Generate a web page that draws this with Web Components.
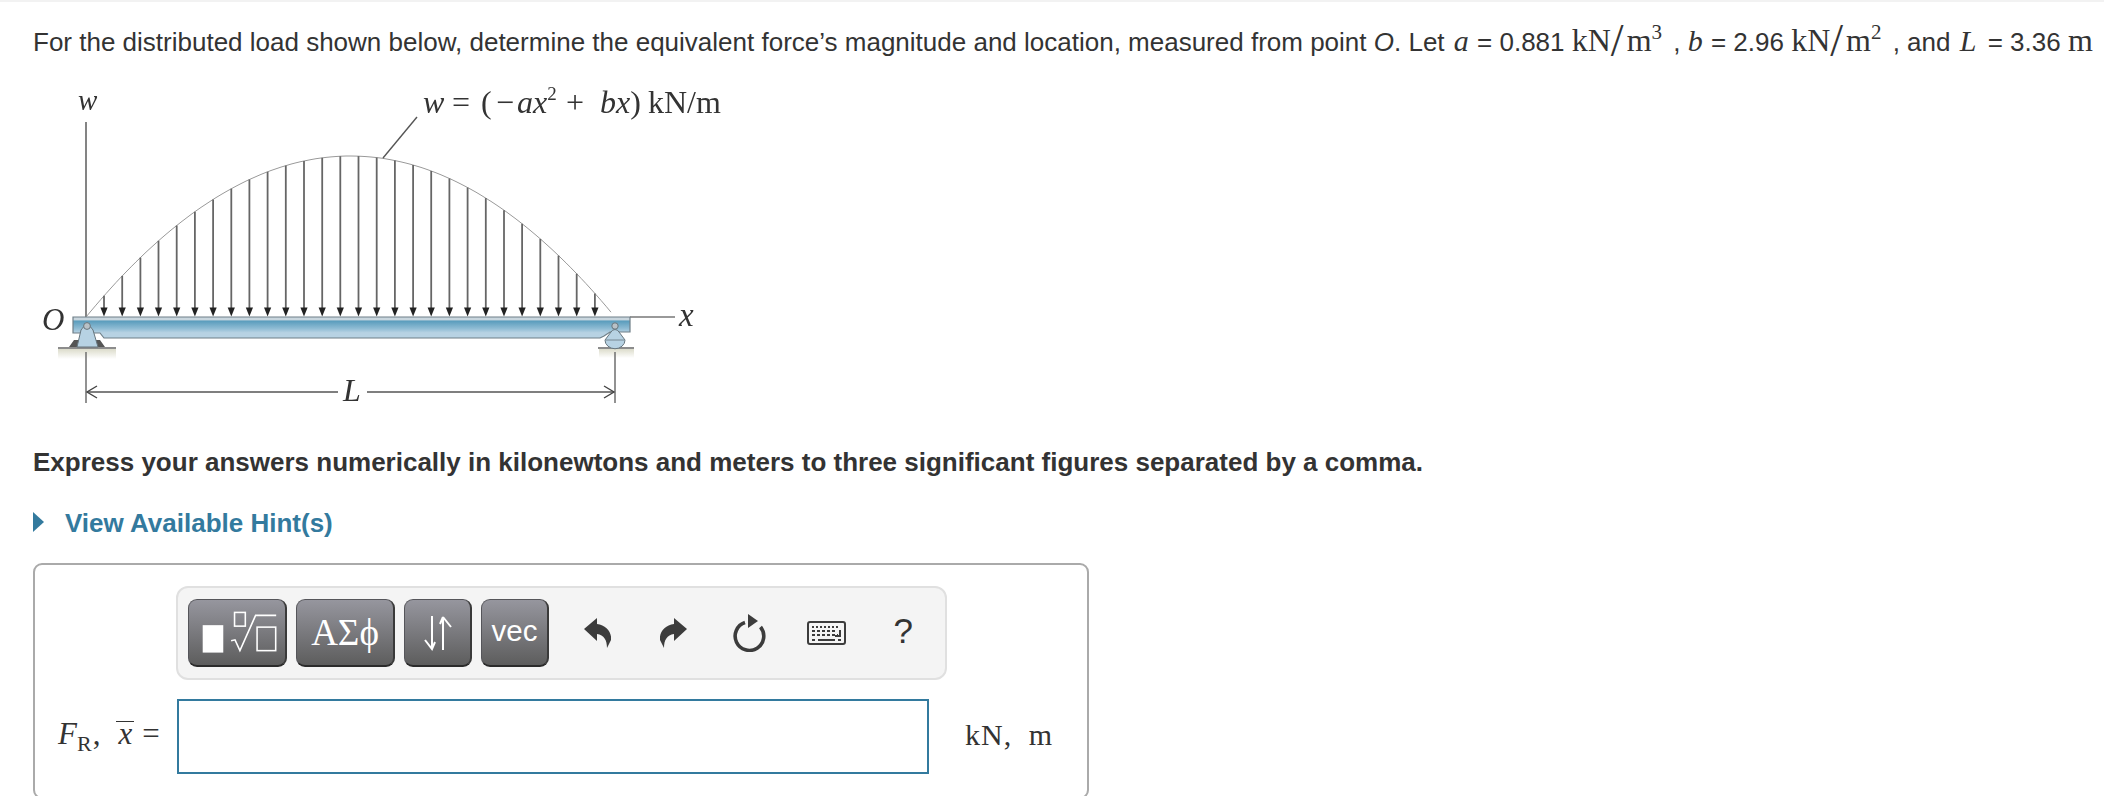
<!DOCTYPE html>
<html>
<head>
<meta charset="utf-8">
<title>Distributed load</title>
<style>
  html, body { margin: 0; height: 796px; overflow: hidden; background: #fff; }
</style>
</head>
<body>
<quiz-page>
  <problem-text>For the distributed load shown below, determine the equivalent force’s magnitude and location, measured from point <i>O</i>. Let <m-var>a</m-var> = 0.881 <m-unit>kN<m-slash>/</m-slash>m<sup>3</sup></m-unit> , <m-var style="margin-left:0">b</m-var> = 2.96 <m-unit>kN<m-slash>/</m-slash>m<sup>2</sup></m-unit> , and <m-var style="margin-right:4px">L</m-var> = 3.36 <m-unit>m</m-unit></problem-text>
  <load-figure></load-figure>
  <instruction-text>Express your answers numerically in kilonewtons and meters to three significant figures separated by a comma.</instruction-text>
  <hint-toggle>View Available Hint(s)</hint-toggle>
  <answer-box></answer-box>
</quiz-page>

<script>
/**
 * Small inline math bits. They only set fonts, no shadow markup of note.
 */
function defineStyled(name, css) {
  customElements.define(name, class extends HTMLElement {
    constructor() {
      super();
      this.attachShadow({mode: 'open'}).innerHTML = `<style>${css}</style><slot></slot>`;
    }
  });
}

defineStyled('m-var', `:host { font: italic 30px/0 "Liberation Serif", serif; margin: 0 1px 0 2px; }`);
defineStyled('m-unit', `:host { font: 32px/0 "Liberation Serif", serif; margin-right: 4px; white-space: nowrap; }
  ::slotted(sup) { font-size: 21px; line-height: 0; vertical-align: 12px; }`);
defineStyled('m-slash', `:host { font: 46px/0 "Liberation Serif", serif; vertical-align: -5px; margin-right: 3px; }`);

/**
 * QuizPage
 */
customElements.define('quiz-page', class QuizPage extends HTMLElement {
constructor() {
  super();
  const template = document.createElement('template');
  template.innerHTML = `
<style>
  :host {
    display: block;
    box-sizing: border-box;
    height: 796px;
    padding: 0 0 0 33px;
    border-top: 2px solid #f2f2f2;
    color: #333;
    font: 26px/30px "Liberation Sans", Arial, sans-serif;
    overflow: hidden;
  }
</style>
<slot></slot>
`;
  this.attachShadow({mode: 'open'}).appendChild(template.content.cloneNode(true));
}
});

/**
 * ProblemText
 */
customElements.define('problem-text', class ProblemText extends HTMLElement {
constructor() {
  super();
  this.attachShadow({mode: 'open'}).innerHTML = `
<style>
  :host {
    display: block;
    margin-top: 25px;
    height: 30px;
    white-space: nowrap;
  }
</style>
<slot></slot>
`;
}
});

/**
 * LoadFigure - the beam drawing, arrows are worked out from the parabola
 */
customElements.define('load-figure', class LoadFigure extends HTMLElement {
constructor() {
  super();

  const curveY = x => {
    const t = (x - 86) / (615 - 86);
    return 317 - 161 * 4 * t * (1 - t);
  };

  let curve = 'M86 317';
  for (let x = 91; x <= 615; x += 5) {
    curve += ` L${x} ${curveY(x).toFixed(1)}`;
  }

  let arrows = '';
  for (let i = 0; i < 28; i++) {
    const x = (104 + i * 18.18).toFixed(1);
    const top = curveY(+x).toFixed(1);
    arrows += `<line x1="${x}" y1="${top}" x2="${x}" y2="310" stroke="#666" stroke-width="1.8"/>`
      + `<path d="M${x - 3.6} 307.5 H${+x + 3.6} L${x} 316.5 Z" fill="#222"/>`;
  }

  this.attachShadow({mode: 'open'}).innerHTML = `
<style>
  :host {
    display: block;
    height: 340px;
    width: 720px;
    margin-top: 23px;
  }
  svg {
    display: block;
    filter: blur(.4px);
  }
  text {
    font-family: "Liberation Serif", "Times New Roman", serif;
    fill: #333;
  }
  .it { font-style: italic; }
</style>
<svg width="720" height="340" viewBox="33 80 720 340">
  <defs>
    <linearGradient id="beam" x1="0" y1="0" x2="0" y2="1">
      <stop offset="0" stop-color="#c9d6de"/>
      <stop offset=".12" stop-color="#c9d6de"/>
      <stop offset=".2" stop-color="#5b9dbd"/>
      <stop offset=".55" stop-color="#8fbcd4"/>
      <stop offset=".75" stop-color="#b7d2e3"/>
      <stop offset="1" stop-color="#b7d2e3"/>
    </linearGradient>
    <linearGradient id="ground" x1="0" y1="0" x2="0" y2="1">
      <stop offset="0" stop-color="#dcdccb"/>
      <stop offset="1" stop-color="#fff"/>
    </linearGradient>
  </defs>

  <text x="78" y="110" class="it" font-size="29">w</text>
  <line x1="86" y1="122" x2="86" y2="318" stroke="#777" stroke-width="1.8"/>

  <path d="${curve}" fill="none" stroke="#999" stroke-width="1"/>
  ${arrows}

  <line x1="383" y1="158" x2="417" y2="117" stroke="#555" stroke-width="1.4"/>
  <text y="113" font-size="32"><tspan x="423" class="it">w</tspan><tspan x="452">=</tspan><tspan x="481">(</tspan><tspan x="496">−</tspan><tspan x="517" class="it">ax</tspan><tspan font-size="19" dy="-13">2</tspan><tspan x="566" dy="13">+</tspan><tspan x="600" class="it">bx</tspan><tspan>)</tspan><tspan x="648">kN/m</tspan></text>

  <line x1="630" y1="317" x2="675" y2="317" stroke="#777" stroke-width="1.6"/>
  <text x="679" y="326" class="it" font-size="33">x</text>
  <text x="42" y="330" class="it" font-size="31">O</text>

  <path d="M73 317 H630 V332 H610 L604 336 L600 338 H104 L100 333 H73 Z" fill="url(#beam)" stroke="#6f7f88" stroke-width="1.2"/>

  <!-- left support -->
  <rect x="58" y="349" width="58" height="10" fill="url(#ground)"/>
  <line x1="58" y1="348" x2="116" y2="348" stroke="#666" stroke-width="1.6"/>
  <path d="M69 347 L74 340 H80 V347 Z M94 347 V340 H100 L105 347 Z" fill="#555"/>
  <path d="M77 347 L81 330 A6.5 6.5 0 0 1 93 330 L98 347 Z" fill="#b7d2e3" stroke="#66757d" stroke-width="1"/>
  <circle cx="87" cy="326" r="3.4" fill="#b9c1c6" stroke="#66757d"/>

  <!-- right support -->
  <rect x="599" y="349" width="35" height="9" fill="url(#ground)"/>
  <line x1="598" y1="348" x2="634" y2="348" stroke="#666" stroke-width="1.6"/>
  <path d="M611 332 A4.5 4.5 0 0 1 619 332 L625 340 A8 7 0 0 1 605 340 Z" fill="#b7d2e3" stroke="#66757d" stroke-width="1"/>
  <line x1="606" y1="340" x2="624" y2="340" stroke="#66757d" stroke-width=".8"/>
  <circle cx="615" cy="326" r="3.2" fill="#b9c1c6" stroke="#66757d"/>

  <!-- dimension L -->
  <line x1="86" y1="352" x2="86" y2="403" stroke="#777" stroke-width="1.6"/>
  <line x1="615" y1="352" x2="615" y2="403" stroke="#777" stroke-width="1.6"/>
  <line x1="87" y1="392" x2="338" y2="392" stroke="#555" stroke-width="1.4"/>
  <line x1="367" y1="392" x2="614" y2="392" stroke="#555" stroke-width="1.4"/>
  <path d="M97 386 L87 392 L97 398 M604 386 L614 392 L604 398" fill="none" stroke="#444" stroke-width="1.4"/>
  <text x="343" y="401" class="it" font-size="32">L</text>
</svg>
`;
}
});

/**
 * InstructionText
 */
customElements.define('instruction-text', class InstructionText extends HTMLElement {
constructor() {
  super();
  this.attachShadow({mode: 'open'}).innerHTML = `
<style>
  :host {
    display: block;
    margin-top: 27px;
    font-weight: bold;
    white-space: nowrap;
  }
</style>
<slot></slot>
`;
}
});

/**
 * HintToggle
 */
customElements.define('hint-toggle', class HintToggle extends HTMLElement {
constructor() {
  super();
  this.attachShadow({mode: 'open'}).innerHTML = `
<style>
  :host {
    display: flex;
    align-items: center;
    gap: 21px;
    margin-top: 31px;
    color: #337a9e;
    font-weight: bold;
    cursor: pointer;
  }
  svg { display: block; margin-top: -3px; }
</style>
<svg width="11" height="20" viewBox="0 0 11 20"><path d="M0 0 L11 10 L0 20 Z" fill="#337a9e"/></svg>
<slot></slot>
`;
}
});

/**
 * ToolButton - dark gradient key of the math palette
 */
customElements.define('tool-button', class ToolButton extends HTMLElement {
constructor() {
  super();
  this.attachShadow({mode: 'open'}).innerHTML = `
<style>
  :host {
    display: flex;
    align-items: center;
    justify-content: center;
    box-sizing: border-box;
    height: 68px;
    border: 1px solid #55555a;
    border-bottom: 2px solid #2b2b2b;
    border-right: 2px solid #3a3a3a;
    border-radius: 9px;
    background: linear-gradient(#96969e, #5d5d5d);
    color: #fff;
  }
</style>
<slot></slot>
`;
}

static get observedAttributes() {
  return ['width'];
}

attributeChangedCallback(name, oldValue, newValue) {
  if (name === 'width') {
    this.style.width = `${Math.round(newValue)}px`;
  }
}
});

/**
 * MathToolbar
 */
customElements.define('math-toolbar', class MathToolbar extends HTMLElement {
constructor() {
  super();
  this.attachShadow({mode: 'open'}).innerHTML = `
<style>
  :host {
    display: flex;
    align-items: center;
    box-sizing: border-box;
    width: 771px;
    height: 94px;
    padding: 0 0 0 10px;
    background: #f4f4f4;
    border: 2px solid #e0e0e0;
    border-radius: 12px;
  }
  .keys { display: flex; gap: 9px; margin-right: 10px; }
  .cell {
    display: flex;
    align-items: center;
    justify-content: center;
    width: 76.5px;
    color: #333;
  }
  .symbols { font: 37px "Liberation Serif", serif; }
  .vec { font: 29.5px "Liberation Sans", Arial, sans-serif; margin-top: -3px; }
  .help { font: 35px "Liberation Sans", Arial, sans-serif; margin-top: -4px; }
  svg { display: block; }
</style>
<div class="keys">
  <tool-button width="99">
    <svg width="99" height="68" viewBox="0 0 99 68" style="margin-left:-1px">
      <rect x="15" y="26" width="21" height="28" fill="#fff"/>
      <rect x="47.5" y="13" width="11" height="14" fill="none" stroke="#fff" stroke-width="1.6"/>
      <path d="M44 42 L48 41 L53 52 L69 16 H90" fill="none" stroke="#fff" stroke-width="1.6"/>
      <rect x="70.5" y="28" width="19" height="24" fill="none" stroke="#fff" stroke-width="1.6"/>
    </svg>
  </tool-button>
  <tool-button width="99"><span class="symbols">ΑΣϕ</span></tool-button>
  <tool-button width="68">
    <svg width="30" height="36" viewBox="0 0 30 36">
      <path d="M9 1 V33 M2 25 L9 34 L12 27" fill="none" stroke="#fff" stroke-width="2"/>
      <path d="M20 35 V3 M20 2 L28 12 M20 2 L17 9" fill="none" stroke="#fff" stroke-width="2"/>
    </svg>
  </tool-button>
  <tool-button width="68"><span class="vec">vec</span></tool-button>
</div>
<div class="cell">
  <svg width="27" height="30" viewBox="0 0 27 30"><path d="M0 11 L13 0 V6 C22 7 28 14 27 22 L23 30 C23 22 20 17 13 16 V23 Z" fill="#3c3c3c"/></svg>
</div>
<div class="cell">
  <svg width="27" height="30" viewBox="0 0 27 30"><path transform="matrix(-1 0 0 1 27 0)" d="M0 11 L13 0 V6 C22 7 28 14 27 22 L23 30 C23 22 20 17 13 16 V23 Z" fill="#3c3c3c"/></svg>
</div>
<div class="cell">
  <svg width="34" height="38" viewBox="0 0 34 38">
    <path d="M12 8.5 A14.3 14.3 0 1 0 27.5 13" fill="none" stroke="#3c3c3c" stroke-width="3.6"/>
    <path d="M15 0 L25 7 L15 14 Z" fill="#3c3c3c"/>
  </svg>
</div>
<div class="cell">
  <svg width="39" height="25" viewBox="0 0 39 25">
    <rect x="1" y="1" width="37" height="22" rx="2" fill="#f4f4f4" stroke="#3c3c3c" stroke-width="2"/>
    <path d="M5 6 H33" stroke="#3c3c3c" stroke-width="2" stroke-dasharray="2 2"/>
    <path d="M5 10 H30 M5 14 H31" stroke="#3c3c3c" stroke-width="2" stroke-dasharray="3 2"/>
    <path d="M33 9 V15 H28" fill="none" stroke="#3c3c3c" stroke-width="2"/>
    <path d="M5 19 H8 M11 19 H28 M31 19 H34" stroke="#3c3c3c" stroke-width="2"/>
  </svg>
</div>
<div class="cell help">?</div>
`;
}
});

/**
 * AnswerBox
 */
customElements.define('answer-box', class AnswerBox extends HTMLElement {
constructor() {
  super();
  this.attachShadow({mode: 'open'}).innerHTML = `
<style>
  :host {
    display: block;
    box-sizing: border-box;
    width: 1056px;
    height: 236px;
    margin-top: 25px;
    padding: 21px 0 0 141px;
    border: 2px solid #aaa;
    border-radius: 9px;
  }
  .row {
    display: flex;
    align-items: center;
    margin: 19px 0 0 -141px;
  }
  .label {
    box-sizing: border-box;
    width: 142px;
    padding: 0 0 5px 23px;
    font: 31px "Liberation Serif", serif;
    white-space: nowrap;
  }
  i { font-style: italic; }
  sub { font-size: 22px; line-height: 0; }
  .comma { margin-left: 1px; }
  .bar {
    display: inline-block;
    margin-left: 16px;
    padding: 0 2px;
    border-top: 1.5px solid #333;
    line-height: 23px;
  }
  .eq { margin-left: 8px; }
  input {
    box-sizing: border-box;
    width: 752px;
    height: 75px;
    margin: 0;
    padding: 0 8px;
    border: 2px solid #337a9e;
    border-radius: 0;
    outline: none;
    background: #fff;
  }
  .units {
    margin-left: 36px;
    padding-bottom: 4px;
    font: 30px "Liberation Serif", serif;
    letter-spacing: 1px;
    word-spacing: 8px;
    white-space: nowrap;
  }
</style>
<math-toolbar></math-toolbar>
<div class="row">
  <div class="label"><i>F</i><sub>R</sub><span class="comma">,</span><i class="bar">x</i><span class="eq">=</span></div>
  <input type="text" aria-label="answer">
  <div class="units">kN, m</div>
</div>
`;
}
});
</script>
</body>
</html>
